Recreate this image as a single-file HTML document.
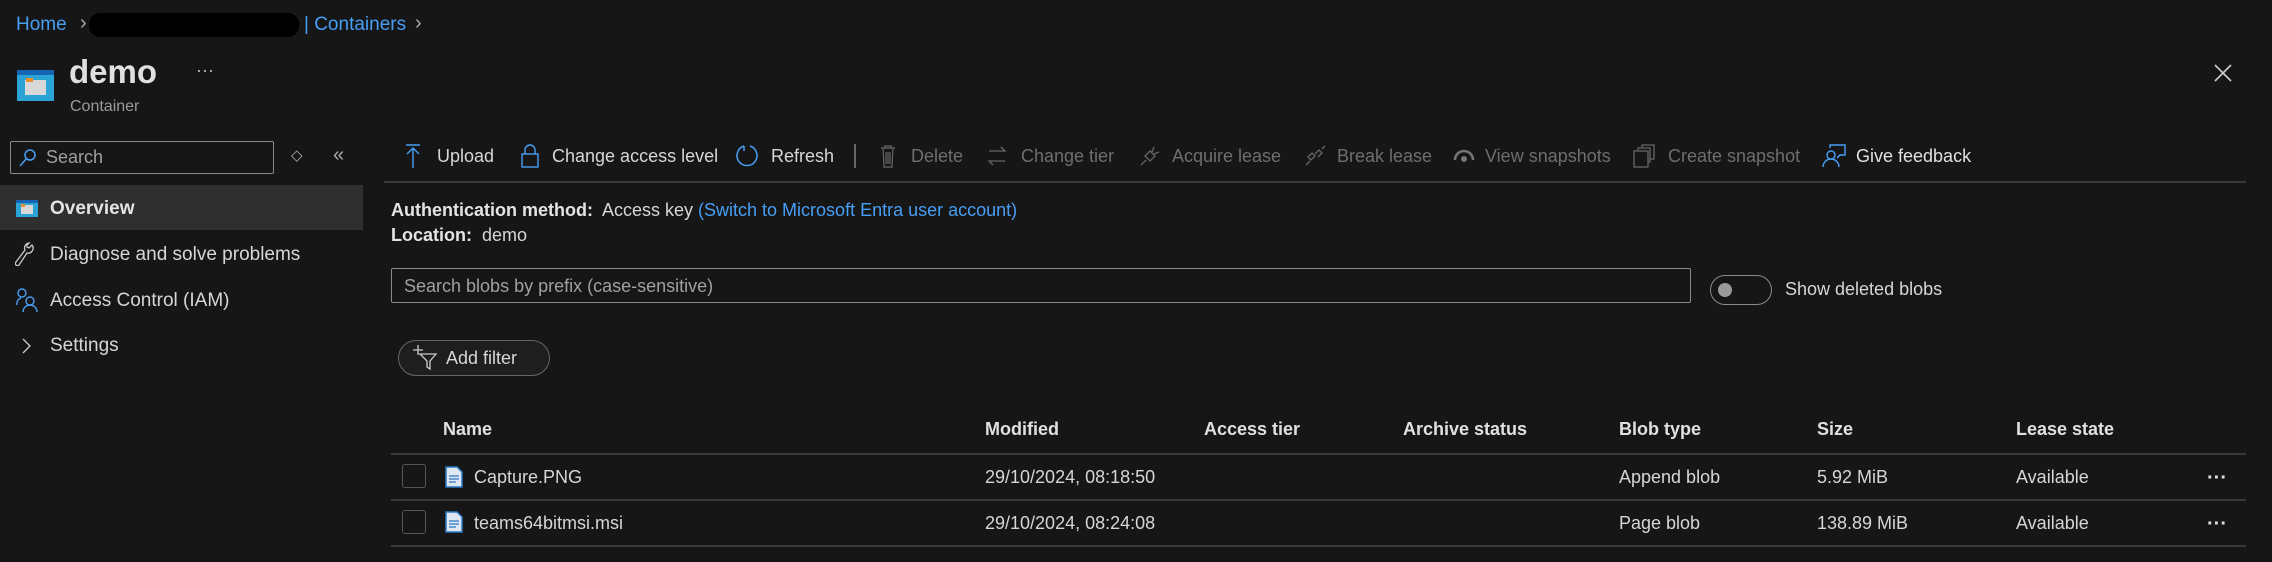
<!DOCTYPE html>
<html><head><meta charset="utf-8">
<style>
*{margin:0;padding:0;box-sizing:border-box}
body{width:2272px;height:562px;background:#161616;overflow:hidden;font-family:"Liberation Sans",sans-serif;color:#d6d6d6;position:relative;font-size:18px}
.a{position:absolute;white-space:nowrap}
.blue{color:#479ef5}
.dis{color:#6e6e6e}
.line{position:absolute;height:2px;background:#3a3a3a}
svg{position:absolute}
</style></head><body>
<div class="a blue" style="left:16px;top:14px;font-size:19px">Home</div>
<div class="a" style="left:80px;top:12px;font-size:20px;color:#aaa">›</div>
<div class="a" style="left:89px;top:13px;width:210px;height:24px;background:#000;border-radius:11px"></div>
<div class="a blue" style="left:304px;top:14px;font-size:19px">| Containers</div>
<div class="a" style="left:415px;top:12px;font-size:20px;color:#aaa">›</div>

<svg style="left:17px;top:70px" width="37" height="31" viewBox="0 0 37 31"><rect width="37" height="31" fill="#2aa4d4"/><rect width="37" height="5" fill="#1466b4"/><rect x="8" y="10" width="21" height="15" fill="#d8d8d8"/><rect x="9" y="8" width="7" height="4" fill="#e8902c"/></svg>
<div class="a" style="left:69px;top:53px;font-size:33px;font-weight:bold;color:#e0e0e0">demo</div>
<div class="a" style="left:196px;top:60px;font-size:18px;color:#bbb">···</div>
<div class="a" style="left:70px;top:98px;font-size:16px;color:#9a9a9a">Container</div>
<svg style="left:2213px;top:63px" width="20" height="20"><path d="M2 2L18 18M18 2L2 18" stroke="#ccc" stroke-width="1.6"/></svg>

<div class="a" style="left:10px;top:141px;width:264px;height:33px;border:1px solid #8a8a8a;border-radius:2px"></div>
<svg style="left:18px;top:148px" width="20" height="20"><circle cx="12" cy="7" r="5" fill="none" stroke="#479ef5" stroke-width="1.5"/><path d="M8.5 10.5L2 18" stroke="#479ef5" stroke-width="1.5"/></svg>
<div class="a" style="left:46px;top:147px;font-size:18px;color:#a0a0a0">Search</div>
<div class="a" style="left:291px;top:146px;font-size:15px;color:#aaa">◇</div>
<div class="a" style="left:333px;top:144px;font-size:20px;color:#aaa">«</div>

<div class="a" style="left:0;top:185px;width:363px;height:45px;background:#2f2f2f"></div>
<svg style="left:16px;top:200px" width="22" height="17"><rect width="22" height="17" fill="#2aa4d4"/><rect width="22" height="3" fill="#1466b4"/><rect x="5" y="5" width="12" height="9" fill="#d8d8d8"/><rect x="5" y="4" width="4" height="3" fill="#e8902c"/></svg>
<div class="a" style="left:50px;top:198px;font-size:19px;font-weight:bold;color:#e4e4e4">Overview</div>
<svg style="left:15px;top:242px" width="20" height="24"><path d="M14 1a5 5 0 0 0-4 7L1 20a2 2 0 0 0 3 3l8-12a5 5 0 0 0 5-8l-3 3-2-1V3z" fill="none" stroke="#ccc" stroke-width="1.3"/></svg>
<div class="a" style="left:50px;top:244px;font-size:19px">Diagnose and solve problems</div>
<svg style="left:16px;top:288px" width="22" height="24"><circle cx="6" cy="5" r="4" fill="none" stroke="#479ef5" stroke-width="1.4"/><circle cx="14" cy="13" r="4" fill="none" stroke="#479ef5" stroke-width="1.4"/><path d="M1 17a6 6 0 0 1 4-7M7 24a7 7 0 0 1 14 0" fill="none" stroke="#479ef5" stroke-width="1.4"/></svg>
<div class="a" style="left:50px;top:290px;font-size:19px">Access Control (IAM)</div>
<svg style="left:21px;top:337px" width="11" height="18"><path d="M2 2l7 7-7 7" fill="none" stroke="#ccc" stroke-width="1.3"/></svg>
<div class="a" style="left:50px;top:335px;font-size:19px">Settings</div>

<!-- toolbar -->
<svg style="left:405px;top:144px" width="16" height="24"><path d="M1 1h14M8 4v20M2 10l6-6 6 6" fill="none" stroke="#479ef5" stroke-width="1.4"/></svg>
<div class="a" style="left:437px;top:146px">Upload</div>
<svg style="left:521px;top:144px" width="18" height="24"><rect x="1" y="10" width="16" height="13" fill="none" stroke="#479ef5" stroke-width="1.4"/><path d="M4 10V6a5 5 0 0 1 10 0v4" fill="none" stroke="#479ef5" stroke-width="1.4"/></svg>
<div class="a" style="left:552px;top:146px">Change access level</div>
<svg style="left:736px;top:144px" width="24" height="24"><path d="M8 2a10 10 0 1 0 6 0M8 2V7" fill="none" stroke="#479ef5" stroke-width="1.5"/></svg>
<div class="a" style="left:771px;top:146px">Refresh</div>
<div class="a" style="left:854px;top:144px;width:2px;height:24px;background:#666"></div>
<svg style="left:880px;top:144px" width="16" height="24"><path d="M1 4h14M5 4V2h6v2M3 4l1 19h8l1-19M6 8v12M8 8v12M10 8v12" fill="none" stroke="#666" stroke-width="1.2"/></svg>
<div class="a dis" style="left:911px;top:146px">Delete</div>
<svg style="left:987px;top:145px" width="20" height="22"><path d="M2 6h16l-4-4M18 16H2l4 4" fill="none" stroke="#666" stroke-width="1.3"/></svg>
<div class="a dis" style="left:1021px;top:146px">Change tier</div>
<svg style="left:1138px;top:144px" width="24" height="24"><path d="M3 21l5-5M16 3l-2 5M21 8l-5 2M7 12l5-5 5 5-5 5z" fill="none" stroke="#666" stroke-width="1.3"/></svg>
<div class="a dis" style="left:1172px;top:146px">Acquire lease</div>
<svg style="left:1303px;top:144px" width="24" height="24"><path d="M3 21l4-4M5 13l4-4 3 3-4 4zM12 10l4-4 3 3-4 4M19 5l3-3" fill="none" stroke="#666" stroke-width="1.3"/></svg>
<div class="a dis" style="left:1337px;top:146px">Break lease</div>
<svg style="left:1453px;top:148px" width="22" height="16"><path d="M2 12a9 9 0 0 1 18 0" fill="none" stroke="#777" stroke-width="2.5"/><circle cx="11" cy="11" r="3" fill="#777"/></svg>
<div class="a dis" style="left:1485px;top:146px">View snapshots</div>
<svg style="left:1633px;top:144px" width="22" height="24"><rect x="1" y="7" width="14" height="16" fill="none" stroke="#666" stroke-width="1.3"/><path d="M5 7V4h12v14h-2M9 4V1h12v14h-4" fill="none" stroke="#666" stroke-width="1.3"/></svg>
<div class="a dis" style="left:1668px;top:146px">Create snapshot</div>
<svg style="left:1822px;top:144px" width="24" height="24"><circle cx="9" cy="11" r="4" fill="none" stroke="#479ef5" stroke-width="1.4"/><path d="M1 23a8 8 0 0 1 16 0M8 4V1h15v10h-5l-3 3" fill="none" stroke="#479ef5" stroke-width="1.4"/></svg>
<div class="a" style="left:1856px;top:146px;color:#e0e0e0">Give feedback</div>
<div class="line" style="left:384px;top:181px;width:1862px"></div>

<div class="a" style="left:391px;top:200px;font-size:18px"><b style="color:#e4e4e4">Authentication method:</b>&nbsp; Access key <span class="blue">(Switch to Microsoft Entra user account)</span></div>
<div class="a" style="left:391px;top:225px;font-size:18px"><b style="color:#e4e4e4">Location:</b>&nbsp; demo</div>

<div class="a" style="left:391px;top:268px;width:1300px;height:35px;border:1px solid #8a8a8a;border-radius:2px"></div>
<div class="a" style="left:404px;top:276px;font-size:18px;color:#a0a0a0">Search blobs by prefix (case-sensitive)</div>
<div class="a" style="left:1710px;top:275px;width:62px;height:30px;border:1.5px solid #8a8a8a;border-radius:15px"></div>
<div class="a" style="left:1718px;top:283px;width:14px;height:14px;border-radius:7px;background:#9a9a9a"></div>
<div class="a" style="left:1785px;top:279px;font-size:18px">Show deleted blobs</div>

<div class="a" style="left:398px;top:340px;width:152px;height:36px;border:1.5px solid #666;border-radius:18px;background:#1e1e1e"></div>
<svg style="left:412px;top:344px" width="26" height="26"><path d="M6 1v10M1 6h10M8 10h16l-6 7v8l-3-2v-6z" fill="none" stroke="#ccc" stroke-width="1.3"/></svg>
<div class="a" style="left:446px;top:348px;font-size:18px">Add filter</div>

<div class="a" style="top:419px;left:0;width:2272px;font-size:18px;font-weight:bold;color:#e0e0e0">
<span class="a" style="left:443px">Name</span><span class="a" style="left:985px">Modified</span><span class="a" style="left:1204px">Access tier</span><span class="a" style="left:1403px">Archive status</span><span class="a" style="left:1619px">Blob type</span><span class="a" style="left:1817px">Size</span><span class="a" style="left:2016px">Lease state</span></div>
<div class="line" style="left:391px;top:453px;width:1855px"></div>
<div class="line" style="left:391px;top:499px;width:1855px"></div>
<div class="line" style="left:391px;top:545px;width:1855px"></div>

<div class="a" style="left:402px;top:464px;width:24px;height:24px;border:1.5px solid #555;border-radius:3px"></div>
<svg style="left:445px;top:466px" width="18" height="22"><path d="M1 1h11l5 5v15H1z" fill="#dfe7f2" stroke="#2b78c4" stroke-width="1.5"/><path d="M4 10h10M4 13h10M4 16h7" stroke="#2b78c4" stroke-width="1.3"/></svg>
<div class="a" style="left:474px;top:467px;font-size:18px">Capture.PNG</div>
<div class="a" style="left:985px;top:467px;font-size:18px">29/10/2024, 08:18:50</div>
<div class="a" style="left:1619px;top:467px;font-size:18px">Append blob</div>
<div class="a" style="left:1817px;top:467px;font-size:18px">5.92 MiB</div>
<div class="a" style="left:2016px;top:467px;font-size:18px">Available</div>
<div class="a" style="left:2207px;top:467px;font-size:20px;font-weight:bold;color:#ddd">···</div>

<div class="a" style="left:402px;top:510px;width:24px;height:24px;border:1.5px solid #555;border-radius:3px"></div>
<svg style="left:445px;top:511px" width="18" height="22"><path d="M1 1h11l5 5v15H1z" fill="#dfe7f2" stroke="#2b78c4" stroke-width="1.5"/><path d="M4 10h10M4 13h10M4 16h7" stroke="#2b78c4" stroke-width="1.3"/></svg>
<div class="a" style="left:474px;top:513px;font-size:18px">teams64bitmsi.msi</div>
<div class="a" style="left:985px;top:513px;font-size:18px">29/10/2024, 08:24:08</div>
<div class="a" style="left:1619px;top:513px;font-size:18px">Page blob</div>
<div class="a" style="left:1817px;top:513px;font-size:18px">138.89 MiB</div>
<div class="a" style="left:2016px;top:513px;font-size:18px">Available</div>
<div class="a" style="left:2207px;top:513px;font-size:20px;font-weight:bold;color:#ddd">···</div>
</body></html>
